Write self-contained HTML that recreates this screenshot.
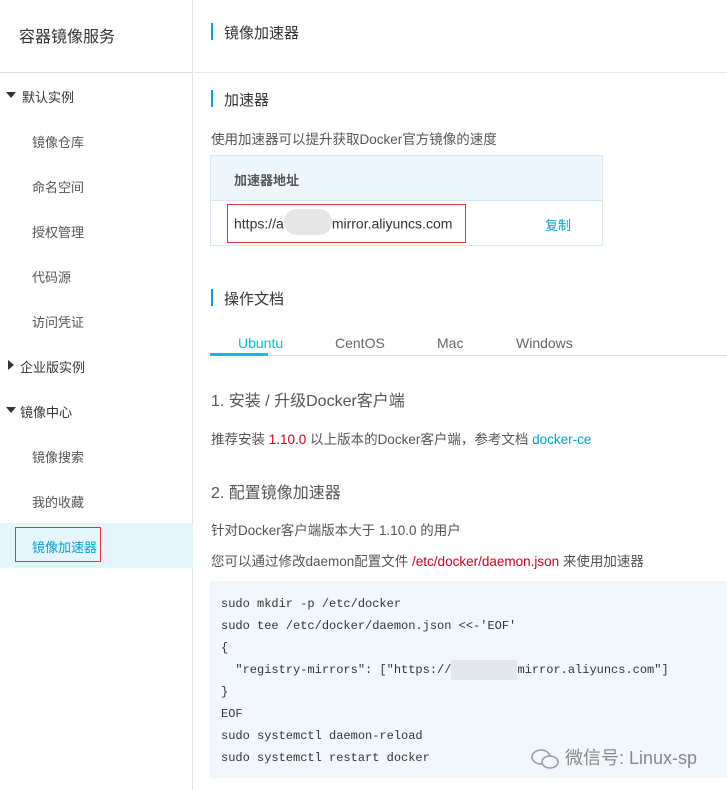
<!DOCTYPE html>
<html><head><meta charset="utf-8"><style>
*{margin:0;padding:0;box-sizing:border-box}
body{width:727px;height:790px;background:#fff;font-family:"Liberation Sans","Noto Sans CJK SC",sans-serif;color:#333;position:relative;overflow:hidden;font-size:13px}
.a{position:absolute;white-space:nowrap}
.side{position:absolute;left:0;top:0;width:193px;height:790px;border-right:1px solid #e2e2e2}
.bar{position:absolute;width:2px;height:17px;background:#00a2d6}
.mono{font-family:"Liberation Mono","Noto Sans CJK SC",monospace;font-size:12px;color:#333}
.tri{position:absolute;width:0;height:0}
.s{font-size:13px}
</style></head><body>
<div class="side"></div>
<div class="a" style="left:0;top:72px;width:193px;height:1px;background:#e2e2e2"></div>
<div class="a" style="left:194px;top:72px;width:533px;height:1px;background:#e8e8e8"></div>
<div class="a" style="left:19px;top:23px;font-size:16px;color:#333">容器镜像服务</div>

<div class="tri" style="left:6px;top:92px;border-left:5px solid transparent;border-right:5px solid transparent;border-top:6px solid #333"></div>
<div class="a s" style="left:22px;top:87px">默认实例</div>
<div class="a s" style="left:32px;top:132px;color:#555">镜像仓库</div>
<div class="a s" style="left:32px;top:177px;color:#555">命名空间</div>
<div class="a s" style="left:32px;top:222px;color:#555">授权管理</div>
<div class="a s" style="left:32px;top:267px;color:#555">代码源</div>
<div class="a s" style="left:32px;top:312px;color:#555">访问凭证</div>
<div class="tri" style="left:8px;top:360px;border-top:5px solid transparent;border-bottom:5px solid transparent;border-left:6px solid #333"></div>
<div class="a s" style="left:20px;top:357px">企业版实例</div>
<div class="tri" style="left:6px;top:407px;border-left:5px solid transparent;border-right:5px solid transparent;border-top:6px solid #333"></div>
<div class="a s" style="left:20px;top:402px">镜像中心</div>
<div class="a s" style="left:32px;top:447px;color:#555">镜像搜索</div>
<div class="a s" style="left:32px;top:492px;color:#555">我的收藏</div>
<div class="a" style="left:0;top:523px;width:193px;height:45px;background:#e4f6fb"></div>
<div class="a" style="left:15px;top:527px;width:86px;height:35px;border:1px solid #e33"></div>
<div class="a s" style="left:32px;top:537px;color:#00a2d6">镜像加速器</div>

<div class="bar" style="left:211px;top:23px"></div>
<div class="a" style="left:224px;top:22px;font-size:15px">镜像加速器</div>
<div class="bar" style="left:211px;top:90px"></div>
<div class="a" style="left:224px;top:89px;font-size:15px">加速器</div>
<div class="a" style="left:211px;top:128px;font-size:13.5px;color:#555">使用加速器可以提升获取Docker官方镜像的速度</div>

<div class="a" style="left:210px;top:155px;width:393px;height:91px;border:1px solid #dbe8f3"></div>
<div class="a" style="left:211px;top:156px;width:391px;height:45px;background:#eef6fe;border-bottom:1px solid #d6e6f4"></div>
<div class="a" style="left:234px;top:170px;font-size:13px;color:#555;font-weight:bold">加速器地址</div>
<div class="a" style="left:227px;top:204px;width:239px;height:39px;border:1px solid #e33"></div>
<div class="a" style="left:234px;top:215px;font-size:14px;color:#333">https://a<span style="display:inline-block;width:48px;height:26px;background:#e6e6e6;border-radius:13px;vertical-align:middle;margin-top:-6px"></span>mirror.aliyuncs.com</div>
<div class="a" style="left:545px;top:215px;font-size:13px;color:#00a2d6">复制</div>

<div class="bar" style="left:211px;top:289px"></div>
<div class="a" style="left:224px;top:288px;font-size:15px">操作文档</div>
<div class="a" style="left:210px;top:355px;width:517px;height:1px;background:#e2e2e2"></div>
<div class="a" style="left:210px;top:353px;width:58px;height:3px;background:#00c1de"></div>
<div class="a" style="left:238px;top:335px;font-size:14px;color:#00c1de">Ubuntu</div>
<div class="a" style="left:335px;top:335px;font-size:14px;color:#666">CentOS</div>
<div class="a" style="left:437px;top:335px;font-size:14px;color:#666">Mac</div>
<div class="a" style="left:516px;top:335px;font-size:14px;color:#666">Windows</div>

<div class="a" style="left:211px;top:387px;font-size:16px;color:#555">1. 安装 / 升级Docker客户端</div>
<div class="a" style="left:211px;top:428px;font-size:13.5px;color:#555">推荐安装 <span style="color:#d0021b">1.10.0</span> 以上版本的Docker客户端，参考文档 <span style="color:#00a2d6">docker-ce</span></div>
<div class="a" style="left:211px;top:479px;font-size:16px;color:#555">2. 配置镜像加速器</div>
<div class="a" style="left:211px;top:519px;font-size:13.5px;color:#555">针对Docker客户端版本大于 1.10.0 的用户</div>
<div class="a" style="left:211px;top:550px;font-size:13.5px;color:#555">您可以通过修改daemon配置文件 <span style="color:#d0021b">/etc/docker/daemon.json</span> 来使用加速器</div>

<div class="a" style="left:210px;top:581px;width:517px;height:197px;background:#f1f7fd"></div>
<div class="a mono" style="left:221px;top:593px;line-height:22px;white-space:pre">sudo mkdir -p /etc/docker
sudo tee /etc/docker/daemon.json &lt;&lt;-'EOF'
{
  "registry-mirrors": ["https://<span style="display:inline-block;width:66px;height:20px;background:#e4e7ec;vertical-align:middle"></span>mirror.aliyuncs.com"]
}
EOF
sudo systemctl daemon-reload
sudo systemctl restart docker</div>
<div class="a" style="left:530px;top:744px;font-size:18px;color:#888">
<svg width="30" height="22" viewBox="0 0 30 22" style="vertical-align:middle"><ellipse cx="11" cy="9" rx="9" ry="7" fill="none" stroke="#999" stroke-width="1.5"/><ellipse cx="20" cy="14" rx="8" ry="6" fill="#f1f7fd" stroke="#999" stroke-width="1.5"/></svg> 微信号: Linux-sp</div>
</body></html>
